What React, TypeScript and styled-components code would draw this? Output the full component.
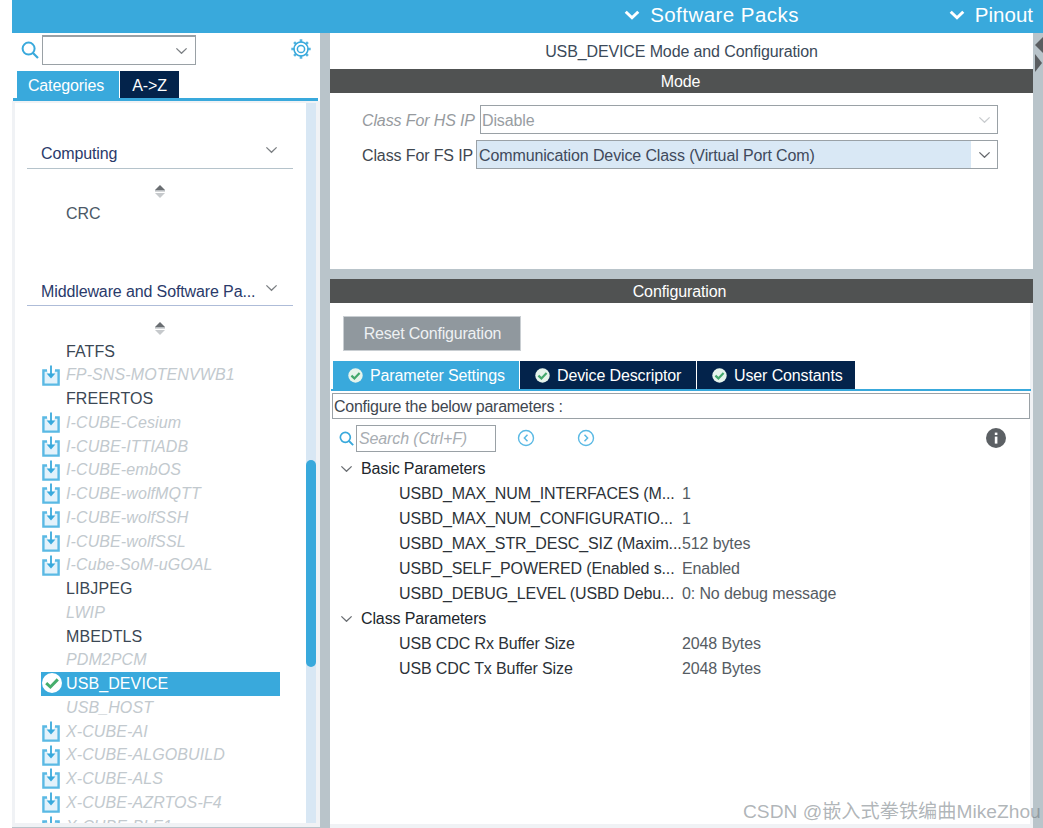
import React from 'react';
import styled, { createGlobalStyle } from 'styled-components';

const Global = createGlobalStyle`
  html, body { margin: 0; padding: 0; background: #fff; }
  body { font-family: "Liberation Sans", Arial, sans-serif; font-size: 16px; color: #3b4a5a; letter-spacing: -0.12px; }
  * { box-sizing: border-box; }
`;

const Page = styled.div`
  position: relative; width: 1043px; height: 828px; overflow: hidden; padding-left: 12px; background: #fff;
`;
const TopBar = styled.header`
  height: 33px; background: #39a9dc; display: flex; align-items: center; justify-content: flex-end; color: #fff; font-size: 20.5px; padding-right: 10px; letter-spacing: 0;
`;
const TopItem = styled.div<{ $gap: number; $track?: number }>`
  display: flex; align-items: center; gap: 10px; margin-left: ${p => p.$gap}px; padding-bottom: 3px; letter-spacing: ${p => p.$track ?? 0}px;
`;
const Main = styled.div`
  display: flex; height: 795px; background: #b9c4ca; padding-bottom: 1px;
`;
const Sidebar = styled.aside`
  width: 308px; background: #fff; display: flex; flex-direction: column; margin-right: 10px;
`;
const SearchRow = styled.div`
  height: 38px; display: flex; align-items: flex-start; padding: 2px 9px 0 9px;
`;
const LoupeSlot = styled.div`
  padding-top: 6px;
`;
const Combo = styled.div`
  width: 154px; height: 30px; border: 1.5px solid #9aa1a6; border-top-width: 2px; display: flex; align-items: center; justify-content: flex-end; padding-right: 7px; margin-left: 3px;
`;
const GearWrap = styled.div`
  margin: 4px 0 0 auto;
`;
const SideTabs = styled.div`
  height: 30px; display: flex; gap: 1px; padding-left: 4px; border-bottom: 3px solid #39a9dc; margin: 0 2px 0 1px;
`;
const SideTab = styled.div<{ $active?: boolean; $w: number; $pr?: number }>`
  width: ${p => p.$w}px; height: 27px; background: ${p => (p.$active ? '#39a9dc' : '#03234b')}; color: #fff; text-align: center; line-height: 29px; font-size: 16px; padding-right: ${p => p.$pr ?? 0}px;
`;
const SideBody = styled.div`
  flex: 1; min-height: 0; display: flex; background: #f0f2f5; padding: 2px 4px 4px 3px;
`;
const ListArea = styled.div`
  flex: 1; min-width: 0; background: #fff; overflow: hidden; padding: 34px 0 0 12px;
`;
const Track = styled.div`
  width: 10px; background: #d8e7f4; padding-top: 357px;
`;
const Thumb = styled.div`
  height: 207px; width: 10px; background: #39a9dc; border-radius: 5px;
`;
const GroupHead = styled.div<{ $second?: boolean }>`
  width: 266px; height: 32px; border-bottom: 1.5px solid ${p => (p.$second ? '#aebcd8' : '#b5c3cb')}; display: flex; align-items: center; justify-content: space-between; padding: ${p => (p.$second ? '3px' : '0')} 15px 0 14px; color: #2a3a6a; font-size: 16px;
`;
const GroupLabel = styled.span`
  white-space: nowrap; padding-top: 2px;
`;
const HeadChevron = styled.span`
  display: block; margin-bottom: 5px;
`;
const Chevron = styled.svg`
  display: block; flex: none;
`;
const Sorter = styled.div<{ $h: number }>`
  width: 266px; display: flex; justify-content: center; height: ${p => p.$h}px; padding-top: 15px;
`;
const Item = styled.div<{ $sel?: boolean; $off?: boolean; $plain?: boolean }>`
  width: 239px; height: 23.75px; margin-left: 14px; display: flex; align-items: center; padding-left: 25px; position: relative; white-space: nowrap; letter-spacing: ${p => (p.$plain ? '-0.1px' : '0.1px')};
  color: ${p => (p.$plain ? '#4b5866' : p.$sel ? '#fff' : p.$off ? '#c2c9ce' : '#3b4754')};
  background: ${p => (p.$sel ? '#39a9dc' : 'transparent')};
  font-style: ${p => (p.$off ? 'italic' : 'normal')};
`;
const ItemIcon = styled.span`
  position: absolute; left: 1px; top: 1px; display: block; line-height: 0;
`;
const Spacer = styled.div<{ $h: number }>`
  height: ${p => p.$h}px;
`;
const Right = styled.section`
  width: 703px; display: flex; flex-direction: column;
`;
const ModePanel = styled.div`
  height: 236px; background: #fff; display: flex; flex-direction: column;
`;
const PanelTitle = styled.div`
  height: 36px; display: flex; align-items: center; justify-content: center; color: #3b4a5a; padding: 2px 0 0 0;
`;
const DarkBar = styled.div<{ $pr?: number }>`
  height: 24px; background: #505252; color: #fff; display: flex; align-items: center; justify-content: center; padding: 2px ${p => p.$pr ?? 2}px 0 0;
`;
const FormRows = styled.div`
  padding: 12px 35px 0 32px; display: flex; flex-direction: column; gap: 6px;
`;
const FormRow = styled.div`
  display: flex; align-items: center; height: 29px;
`;
const FieldLabel = styled.span<{ $off?: boolean; $w: number }>`
  width: ${p => p.$w}px; white-space: nowrap; flex: none; padding-top: 2px;
  color: ${p => (p.$off ? '#969a9e' : '#3f4750')}; font-style: ${p => (p.$off ? 'italic' : 'normal')};
`;
const Select = styled.div<{ $on?: boolean }>`
  flex: 1; height: 29px; border: 1.5px solid #9aa1a6; display: flex; align-items: stretch; min-width: 0;
  color: ${p => (p.$on ? '#3f4a5c' : '#989da2')};
`;
const SelectValue = styled.div<{ $on?: boolean }>`
  flex: 1; background: ${p => (p.$on ? '#d9e8f5' : '#fff')}; display: flex; align-items: center; padding: 2px 0 0 ${p => (p.$on ? 2 : 1)}px;
`;
const SelectBtn = styled.div`
  width: 26px; display: flex; align-items: center; justify-content: center; background: #fff;
`;
const Gap = styled.div`
  height: 10px; flex: none;
`;
const ConfigPanel = styled.div`
  flex: 1; min-height: 0; background: #fff; display: flex; flex-direction: column; border-bottom: 4px solid #f0f2f5; border-right: 3px solid #f0f2f5;
  margin-bottom: -1px;
`;
const ConfigBody = styled.div`
  padding: 13px 0 0 1px; display: flex; flex-direction: column;
`;
const ResetButton = styled.button`
  width: 178px; height: 35px; margin-left: 12px; background: #90989e; border: 1px solid #c9ced2; color: #eef1f3; font: 16px "Liberation Sans", Arial, sans-serif; letter-spacing: -0.2px; padding: 0 0 0 1px;
`;
const ConfTabs = styled.div`
  margin-top: 10px; height: 30px; display: flex; gap: 1px; padding-left: 2px; border-bottom: 2px solid #39a9dc; width: 700px;
`;
const ConfTab = styled.div<{ $active?: boolean; $w: number }>`
  width: ${p => p.$w}px; height: 28px; background: ${p => (p.$active ? '#39a9dc' : '#03234b')}; color: #fff; display: flex; align-items: center; gap: 7px; padding: 1px 0 0 15px; white-space: nowrap;
`;
const HintBox = styled.div`
  margin: 2px 0 0 1px; width: 698px; height: 26px; border: 1.5px solid #9aa1a6; display: flex; align-items: center; padding: 2px 0 0 1px; color: #3f4750; white-space: nowrap; letter-spacing: -0.25px;
`;
const ToolRow = styled.div`
  height: 34px; margin-top: 2px; display: flex; align-items: center; padding-left: 8px;
`;
const SearchBox = styled.div`
  width: 140px; height: 27px; margin-left: 2px; border: 1.5px solid #9aa1a6; font-style: italic; color: #a8adb2; display: flex; align-items: center; padding: 1px 0 0 2px; white-space: nowrap;
`;
const NavBtn = styled.div<{ $ml: number }>`
  margin-left: ${p => p.$ml}px; line-height: 0;
`;
const InfoBtn = styled.div`
  margin-left: 391px; line-height: 0;
`;
const Tree = styled.div`
  padding-top: 1px;
`;
const TreeHead = styled.div`
  height: 25px; display: flex; align-items: center; padding-left: 9px; gap: 8px; color: #20262c;
`;
const TreeRow = styled.div`
  height: 25px; display: flex; align-items: center; padding-left: 68px; white-space: nowrap; color: #2c3238;
`;
const ParamName = styled.span`
  width: 283px; flex: none;
`;
const ParamValue = styled.span`
  color: #555c63;
`;
const SideArrows = styled.svg`
  position: absolute; right: 0; top: 33px;
`;
const Watermark = styled.div`
  position: absolute; left: 743px; top: 796px; font: 19.2px "Liberation Sans", "Noto Sans CJK SC", sans-serif; letter-spacing: 0; color: rgba(110,118,125,0.55); white-space: nowrap;
`;

const Down = ({ s = 14, c = '#7b7f83', w = 1.4 }: { s?: number; c?: string; w?: number }) => (
  <Chevron width={s} height={s * 0.6} viewBox="0 0 14 8.4">
    <path d="M1.5 1.5 L7 6.8 L12.5 1.5" fill="none" stroke={c} strokeWidth={w} />
  </Chevron>
);
const Loupe = ({ s = 18 }: { s?: number }) => (
  <svg width={s} height={s} viewBox="0 0 18 18" style={{ display: 'block', flex: 'none' }}>
    <circle cx="7.6" cy="7.6" r="6" fill="none" stroke="#39a9dc" strokeWidth="2" />
    <path d="M12 12 L17 17" stroke="#39a9dc" strokeWidth="2.2" />
  </svg>
);
const Gear = () => (
  <svg width="20" height="20" viewBox="0 0 20 20" style={{ display: 'block' }}>
    <circle cx="10" cy="10" r="7" fill="none" stroke="#39a9dc" strokeWidth="1.5" />
    <circle cx="10" cy="10" r="3.6" fill="none" stroke="#39a9dc" strokeWidth="1.5" />
    <g stroke="#39a9dc" strokeWidth="2.6" opacity=".85">
      <path d="M10 0.3 V3.4 M10 16.6 V19.7 M0.3 10 H3.4 M16.6 10 H19.7 M3.1 3.1 L5.3 5.3 M14.7 14.7 L16.9 16.9 M16.9 3.1 L14.7 5.3 M5.3 14.7 L3.1 16.9" />
    </g>
  </svg>
);
const SortGlyph = () => (
  <svg width="12" height="15" viewBox="0 0 12 15" style={{ display: 'block' }}>
    <path d="M1 6 L6 1 L11 6 Z" fill="#6a6e72" />
    <path d="M1 9 L6 14 L11 9 Z" fill="#c6c9cc" />
    <rect x="1" y="6" width="10" height="1.6" fill="#b9bdc0" />
  </svg>
);
const Download = () => (
  <svg width="18" height="21" viewBox="0 0 18 21" style={{ display: 'block' }}>
    <path d="M5 5.5 H1.4 V19.6 H16.6 V5.5 H13" fill="#e3f2fb" stroke="#5ab9e4" strokeWidth="2.4" />
    <path d="M5.8 0 H12.2 V8 H5.8 Z" fill="#fff" />
    <path d="M9 0.5 V11" stroke="#39a9dc" strokeWidth="1.8" />
    <path d="M4.6 8.5 H13.4 L9 13.5 Z" fill="#39a9dc" />
  </svg>
);
const Check = ({ s = 20 }: { s?: number }) => (
  <svg width={s} height={s} viewBox="0 0 20 20" style={{ display: 'block', flex: 'none' }}>
    <circle cx="10" cy="10" r="10" fill="#fff" />
    <path d="M4.2 10.2 L8.4 14 L15.8 6.4" fill="none" stroke="#46ae6c" strokeWidth="3" />
  </svg>
);
const SmallCheck = () => (
  <svg width="15" height="15" viewBox="0 0 15 15" style={{ display: 'block', flex: 'none' }}>
    <circle cx="7.5" cy="7.5" r="7.2" fill="#e6f4ec" />
    <path d="M3.4 7.6 L6.4 10.4 L11.6 5" fill="none" stroke="#43a86c" strokeWidth="2.2" />
  </svg>
);
const Nav = ({ dir }: { dir: 'l' | 'r' }) => (
  <svg width="18" height="18" viewBox="0 0 18 18" style={{ display: 'block' }}>
    <circle cx="9" cy="9" r="7.5" fill="none" stroke="#5ab9e4" strokeWidth="1.4" />
    <path d={dir === 'l' ? 'M10.5 5.8 L7.4 9 L10.5 12.2' : 'M7.5 5.8 L10.6 9 L7.5 12.2'} fill="none" stroke="#5ab9e4" strokeWidth="1.5" />
  </svg>
);
const Info = () => (
  <svg width="20" height="20" viewBox="0 0 20 20" style={{ display: 'block' }}>
    <circle cx="10" cy="10" r="10" fill="#5c6064" />
    <rect x="8.8" y="8.6" width="2.6" height="7" fill="#fff" />
    <rect x="8.8" y="4.6" width="2.6" height="2.4" fill="#fff" />
  </svg>
);

const items: { n: string; off?: boolean; dl?: boolean; sel?: boolean }[] = [
  { n: 'FATFS' },
  { n: 'FP-SNS-MOTENVWB1', off: true, dl: true },
  { n: 'FREERTOS' },
  { n: 'I-CUBE-Cesium', off: true, dl: true },
  { n: 'I-CUBE-ITTIADB', off: true, dl: true },
  { n: 'I-CUBE-embOS', off: true, dl: true },
  { n: 'I-CUBE-wolfMQTT', off: true, dl: true },
  { n: 'I-CUBE-wolfSSH', off: true, dl: true },
  { n: 'I-CUBE-wolfSSL', off: true, dl: true },
  { n: 'I-Cube-SoM-uGOAL', off: true, dl: true },
  { n: 'LIBJPEG' },
  { n: 'LWIP', off: true },
  { n: 'MBEDTLS' },
  { n: 'PDM2PCM', off: true },
  { n: 'USB_DEVICE', sel: true },
  { n: 'USB_HOST', off: true },
  { n: 'X-CUBE-AI', off: true, dl: true },
  { n: 'X-CUBE-ALGOBUILD', off: true, dl: true },
  { n: 'X-CUBE-ALS', off: true, dl: true },
  { n: 'X-CUBE-AZRTOS-F4', off: true, dl: true },
  { n: 'X-CUBE-BLE1', off: true, dl: true },
];

const basic = [
  ['USBD_MAX_NUM_INTERFACES (M...', '1'],
  ['USBD_MAX_NUM_CONFIGURATIO...', '1'],
  ['USBD_MAX_STR_DESC_SIZ (Maxim...', '512 bytes'],
  ['USBD_SELF_POWERED (Enabled s...', 'Enabled'],
  ['USBD_DEBUG_LEVEL (USBD Debu...', '0: No debug message'],
];
const klass = [
  ['USB CDC Rx Buffer Size', '2048 Bytes'],
  ['USB CDC Tx Buffer Size', '2048 Bytes'],
];

export default function App() {
  return (
    <Page>
      <Global />
      <TopBar>
        <TopItem $gap={0} $track={0.45}><Down s={16} c="#fff" w={2.6} />Software Packs</TopItem>
        <TopItem $gap={150}><Down s={16} c="#fff" w={2.6} />Pinout</TopItem>
      </TopBar>
      <Main>
        <Sidebar>
          <SearchRow>
            <LoupeSlot><Loupe /></LoupeSlot>
            <Combo><Down s={13} /></Combo>
            <GearWrap><Gear /></GearWrap>
          </SearchRow>
          <SideTabs>
            <SideTab $active $w={102} $pr={4}>Categories</SideTab>
            <SideTab $w={59}>A-&gt;Z</SideTab>
          </SideTabs>
          <SideBody>
            <ListArea>
              <GroupHead><GroupLabel>Computing</GroupLabel><HeadChevron><Down s={13} /></HeadChevron></GroupHead>
              <Sorter $h={33}><SortGlyph /></Sorter>
              <Item $plain>CRC</Item>
              <Spacer $h={48} />
              <GroupHead $second><GroupLabel>Middleware and Software Pa...</GroupLabel><HeadChevron><Down s={13} /></HeadChevron></GroupHead>
              <Sorter $h={34}><SortGlyph /></Sorter>
              {items.map(it => (
                <Item key={it.n} $sel={it.sel} $off={it.off}>
                  {it.dl && <ItemIcon><Download /></ItemIcon>}
                  {it.sel && <ItemIcon><Check /></ItemIcon>}
                  {it.n}
                </Item>
              ))}
            </ListArea>
            <Track><Thumb /></Track>
          </SideBody>
        </Sidebar>
        <Right>
          <ModePanel>
            <PanelTitle>USB_DEVICE Mode and Configuration</PanelTitle>
            <DarkBar>Mode</DarkBar>
            <FormRows>
              <FormRow>
                <FieldLabel $off $w={118}>Class For HS IP</FieldLabel>
                <Select>
                  <SelectValue>Disable</SelectValue>
                  <SelectBtn><Down s={13} c="#c9cccf" /></SelectBtn>
                </Select>
              </FormRow>
              <FormRow>
                <FieldLabel $w={114}>Class For FS IP</FieldLabel>
                <Select $on>
                  <SelectValue $on>Communication Device Class (Virtual Port Com)</SelectValue>
                  <SelectBtn><Down s={13} c="#66696d" /></SelectBtn>
                </Select>
              </FormRow>
            </FormRows>
          </ModePanel>
          <Gap />
          <DarkBar $pr={4}>Configuration</DarkBar>
          <ConfigPanel>
            <ConfigBody>
              <ResetButton>Reset Configuration</ResetButton>
              <ConfTabs>
                <ConfTab $active $w={186}><SmallCheck />Parameter Settings</ConfTab>
                <ConfTab $w={176}><SmallCheck />Device Descriptor</ConfTab>
                <ConfTab $w={158}><SmallCheck />User Constants</ConfTab>
              </ConfTabs>
              <HintBox>Configure the below parameters :</HintBox>
              <ToolRow>
                <Loupe s={15} />
                <SearchBox>Search (Ctrl+F)</SearchBox>
                <NavBtn $ml={21}><Nav dir="l" /></NavBtn>
                <NavBtn $ml={42}><Nav dir="r" /></NavBtn>
                <InfoBtn><Info /></InfoBtn>
              </ToolRow>
              <Tree>
                <TreeHead><Down s={13} c="#6a6e72" />Basic Parameters</TreeHead>
                {basic.map(([a, b]) => (
                  <TreeRow key={a}><ParamName>{a}</ParamName><ParamValue>{b}</ParamValue></TreeRow>
                ))}
                <TreeHead><Down s={13} c="#6a6e72" />Class Parameters</TreeHead>
                {klass.map(([a, b]) => (
                  <TreeRow key={a}><ParamName>{a}</ParamName><ParamValue>{b}</ParamValue></TreeRow>
                ))}
              </Tree>
            </ConfigBody>
          </ConfigPanel>
        </Right>
      </Main>
      <SideArrows width="10" height="42" viewBox="0 0 10 42">
        <path d="M2 12 L10 4 V20 Z" fill="#5a5d60" />
        <path d="M2 21 L9 30 L2 39 Z" fill="#5a5d60" />
      </SideArrows>
      <Watermark>CSDN @嵌入式拳铁编曲MikeZhou</Watermark>
    </Page>
  );
}
